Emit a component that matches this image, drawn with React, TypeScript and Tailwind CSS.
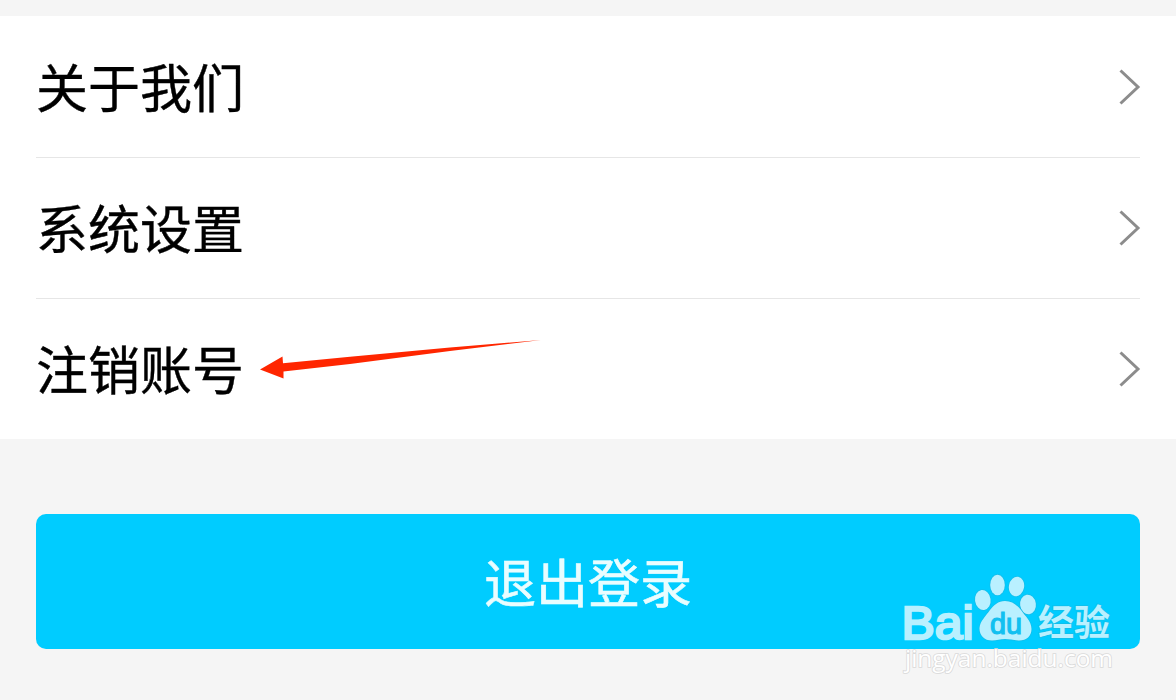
const ITEMS = [
  { id: 'about', label: '关于我们' },
  { id: 'settings', label: '系统设置' },
  { id: 'close-account', label: '注销账号' },
]

function Chevron() {
  return (
    <svg
      className="-mr-px"
      width="22"
      height="36"
      viewBox="0 0 22 36"
      fill="none"
      aria-hidden="true"
    >
      <path d="M1.5 1.5L19 18L1.5 34.5" stroke="#8c8c8c" strokeWidth="3" />
    </svg>
  )
}

function Arrow() {
  return (
    <svg
      className="pointer-events-none absolute left-[240px] top-[325px]"
      width="320"
      height="70"
      viewBox="0 0 320 70"
      aria-hidden="true"
    >
      <path d="M20 44.5L42.5 31.5L43 38.3L110 31.8L210 22.5L301 15L210 26L110 39L43.5 46.5V53.5Z" fill="#ff2600" />
    </svg>
  )
}

function Watermark() {
  return (
    <svg
      className="pointer-events-none absolute left-[890px] top-[560px]"
      width="240"
      height="130"
      viewBox="0 0 240 130"
    >
      <text
        x="11.5"
        y="78.5"
        fill="#b9f0ff"
        stroke="#b9f0ff"
        strokeWidth="2.4"
        fontFamily="'Liberation Sans', sans-serif"
        fontSize="46"
        textLength="72"
        lengthAdjust="spacingAndGlyphs"
      >
        Bai
      </text>
      <g
        fill="#b9f0ff"
        stroke="#1fb4dc"
        strokeOpacity="0.6"
        strokeWidth="1.4"
        paintOrder="stroke"
      >
        {/* paw */}
        <ellipse cx="92.8" cy="40" rx="7.8" ry="10" transform="rotate(-8 92.8 40)" />
        <ellipse cx="107.5" cy="25" rx="7.3" ry="10.3" />
        <ellipse cx="126.5" cy="26.5" rx="7.6" ry="9.8" transform="rotate(10 126.5 26.5)" />
        <ellipse cx="138" cy="44.5" rx="7.9" ry="9.8" transform="rotate(-8 138 44.5)" />
        <path d="M115 41C122 41 127 45 131 50C135 56 141.5 61 141.5 69C141.5 76.5 136 81 128 80.5C123 80 119 79 115 79C110 79 107 80.5 102 80.5C94 80.5 89.3 75 89.5 68C90 61 96 56 100 50C104 45 108 41 115 41Z" />
        <text
          x="148"
          y="76"
          fontFamily="'Noto Sans CJK SC', sans-serif"
          fontWeight="700"
          fontSize="36"
          textLength="72"
        >
          经验
        </text>
      </g>
      <text
        x="15"
        y="107"
        fill="#ffffff"
        stroke="#d9d9d9"
        strokeWidth="1.6"
        paintOrder="stroke"
        fontFamily="'Open Sans', sans-serif"
        fontSize="24"
        textLength="208"
        lengthAdjust="spacingAndGlyphs"
      >
        jingyan.baidu.com
      </text>
      <text
        x="100"
        y="74"
        fill="#12c0f0"
        stroke="#12c0f0"
        strokeWidth="1.2"
        fontFamily="'Liberation Sans', sans-serif"
        fontSize="29"
        textLength="32"
        lengthAdjust="spacingAndGlyphs"
      >
        du
      </text>
    </svg>
  )
}

export default function App() {
  return (
    <main className="relative h-[700px] w-full overflow-hidden bg-[#f5f5f5] pt-4 font-['Noto_Sans_CJK_SC',sans-serif]">
      <ul className="bg-white px-9 pt-px">
        {ITEMS.map((item) => (
          <li
            key={item.id}
            className="h-[141px] border-b border-[#e6e6e6] last:h-[140px] last:border-b-0"
          >
            <button type="button" className="flex h-full w-full items-center justify-between">
              <span className="pb-[3px] text-[52px] leading-[76px] text-black [-webkit-text-stroke:0.4px_#000]">
                {item.label}
              </span>
              <Chevron />
            </button>
          </li>
        ))}
      </ul>
      <div className="px-9 pt-[75px]">
        <button
          type="button"
          className="h-[135px] w-full rounded-[10px] bg-[#00ccff] pb-[2px] text-[52px] leading-[76px] text-[#e9fdff] [-webkit-text-stroke:0.6px_#e9fdff]"
        >
          退出登录
        </button>
      </div>
      <Arrow />
      <Watermark />
    </main>
  )
}
